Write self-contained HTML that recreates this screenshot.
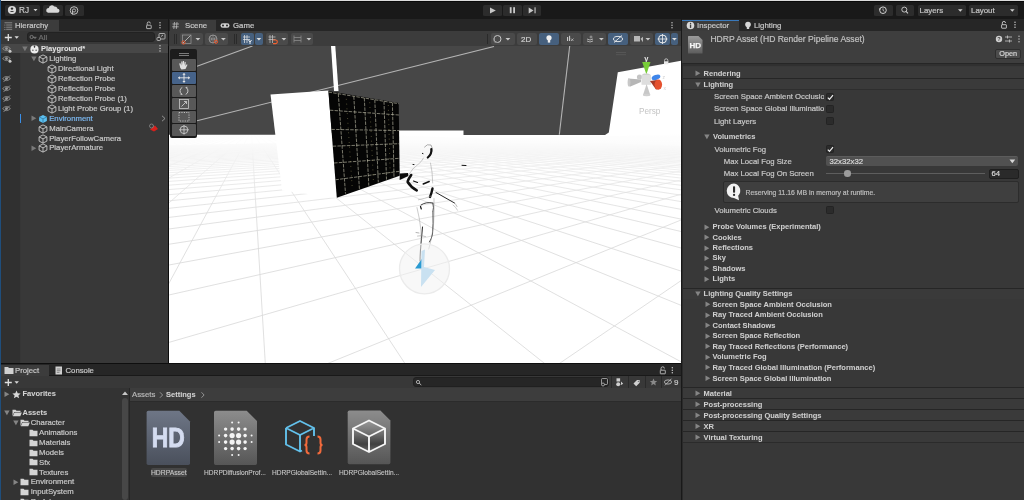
<!DOCTYPE html>
<html><head><meta charset="utf-8">
<style>
*{margin:0;padding:0;box-sizing:border-box}
html,body{width:1024px;height:500px;overflow:hidden;background:#191919;-webkit-font-smoothing:antialiased;font-family:"Liberation Sans",sans-serif;color:#c8c8c8}
.a{position:absolute}

.t{position:absolute;white-space:nowrap;font-size:7.8px;line-height:10px;color:#c8c8c8;-webkit-text-stroke:0.2px currentColor}
.b{font-weight:bold;-webkit-text-stroke:0.05px currentColor}
.btn{position:absolute;background:#2e2e2e;border-radius:2px}
.tb{position:absolute;background:#3c3c3c;border-radius:2px}
</style></head>
<body><div style="position:absolute;left:0;top:0;width:1024px;height:500px;will-change:transform;background:#191919;overflow:hidden">
<!-- top line and toolbar -->
<div class="a" style="left:0px;top:0px;width:1024px;height:0.9px;background:#dcdcdc;"></div>
<div class="a" style="left:0px;top:0.9px;width:1024px;height:1.1px;background:#0a0a0a;"></div>
<div class="a" style="left:0px;top:2px;width:1024px;height:17px;background:#191919;"></div>
<div class="a" style="left:5px;top:4.5px;width:35px;height:11.5px;background:#2c2c2c;border-radius:1.5px"></div>
<div class="a" style="left:43px;top:4.5px;width:19.5px;height:11.5px;background:#2c2c2c;border-radius:1.5px"></div>
<div class="a" style="left:65px;top:4.5px;width:18.5px;height:11.5px;background:#2c2c2c;border-radius:1.5px"></div>
<div class="a" style="left:483px;top:4.5px;width:18.8px;height:11.5px;background:#2c2c2c;border-radius:1.5px"></div>
<div class="a" style="left:503px;top:4.5px;width:18.8px;height:11.5px;background:#2c2c2c;border-radius:1.5px"></div>
<div class="a" style="left:522.5px;top:4.5px;width:18.5px;height:11.5px;background:#2c2c2c;border-radius:1.5px"></div>
<div class="a" style="left:874px;top:4.5px;width:18.6px;height:11.5px;background:#2c2c2c;border-radius:1.5px"></div>
<div class="a" style="left:895.7px;top:4.5px;width:18.7px;height:11.5px;background:#2c2c2c;border-radius:1.5px"></div>
<div class="a" style="left:917.8px;top:4.5px;width:48.2px;height:11.5px;background:#2c2c2c;border-radius:1.5px"></div>
<div class="a" style="left:969.3px;top:4.5px;width:48.7px;height:11.5px;background:#2c2c2c;border-radius:1.5px"></div>
<svg class="a" style="left:0;top:0" width="1024" height="19" viewBox="0 0 1024 19"><circle cx="12" cy="10" r="4.1" fill="#d8d8d8"/><circle cx="12" cy="8.6" r="1.2" fill="#2c2c2c"/><path d="M9.8,11 q2.2,1.8 4.4,0 z" fill="#2c2c2c"/><path d="M33.5,9 h4 l-2,2.2z" fill="#d0d0d0"/><path d="M48,12.8 h9.5 a2,2 0 0 0 0,-4 a2.6,2.6 0 0 0 -3.3,-2.2 a3,3 0 0 0 -5.4,1.3 a2.5,2.5 0 0 0 -0.8,4.9z" fill="#d8d8d8"/><circle cx="74" cy="10.5" r="3.8" fill="none" stroke="#cfcfcf" stroke-width="0.9"/><circle cx="74" cy="10.5" r="1.6" fill="none" stroke="#cfcfcf" stroke-width="0.8"/><line x1="72.5" y1="10.5" x2="72.5" y2="14.6" stroke="#cfcfcf" stroke-width="0.8"/><path d="M490,7.5 L495.8,10.5 L490,13.5Z" fill="#c8c8c8"/><rect x="509.8" y="7.2" width="1.8" height="6" fill="#c8c8c8"/><rect x="513.2" y="7.2" width="1.8" height="6" fill="#c8c8c8"/><path d="M528.7,7.5 L533.5,10.5 L528.7,13.5Z" fill="#c8c8c8"/><rect x="534.5" y="7.3" width="1.1" height="6" fill="#c8c8c8"/><circle cx="883" cy="10.2" r="3.3" fill="none" stroke="#d0d0d0" stroke-width="1"/><path d="M883,8.4 v2 l1.3,0.9" stroke="#d0d0d0" stroke-width="0.8" fill="none"/><path d="M878.8,8.6 l1.8,-0.2 -0.8,1.8z" fill="#d0d0d0"/><circle cx="904.3" cy="9.6" r="2.5" fill="none" stroke="#d0d0d0" stroke-width="0.9"/><line x1="906" y1="11.4" x2="908" y2="13.4" stroke="#d0d0d0" stroke-width="1.1"/><path d="M958,9.3 h4.6 l-2.3,2.4z" fill="#d0d0d0"/><path d="M1010,9.3 h4.6 l-2.3,2.4z" fill="#d0d0d0"/></svg>
<div class="t" style="left:19px;top:5.6px;font-size:8.2px;color:#c8c8c8">RJ</div>
<div class="t" style="left:919.5px;top:5.6px;font-size:7.9px;color:#c4c4c4">Layers</div>
<div class="t" style="left:971px;top:5.6px;font-size:7.9px;color:#c4c4c4">Layout</div>
<div class="a" style="left:0;top:0;width:1px;height:500px;background:#1f4e7c;z-index:5"></div>
<!-- ================= HIERARCHY ================= -->
<div class="a" style="left:1px;top:19px;width:167px;height:12px;background:#262626;"></div>
<div class="a" style="left:1px;top:20px;width:57.5px;height:11px;background:#3c3c3c;"></div>
<svg class="a" style="left:4px;top:21.5px" width="9" height="8" viewBox="0 0 9 8"><g stroke="#c8c8c8" stroke-width="0.55"><line x1="0.5" y1="0.8" x2="8.2" y2="0.8"/><line x1="2.2" y1="3" x2="8.2" y2="3"/><line x1="2.2" y1="5.2" x2="8.2" y2="5.2"/><line x1="2.2" y1="7.3" x2="8.2" y2="7.3"/></g><g fill="#c8c8c8"><rect x="0.5" y="2.7" width="0.8" height="0.7"/><rect x="0.5" y="4.9" width="0.8" height="0.7"/><rect x="0.5" y="7" width="0.8" height="0.7"/></g></svg>
<div class="t" style="left:15px;top:20.9px;font-size:7.75px;color:#c8c8c8">Hierarchy</div>
<svg class="a" style="left:144px;top:21px" width="22" height="9" viewBox="144 21 22 9"><path d="M147.2,25 v-1.5 a1.6,1.6 0 0 1 3.2,0" stroke="#d0d0d0" stroke-width="0.8" fill="none"/><rect x="146.6" y="25.2" width="4.6" height="3.4" rx="0.4" fill="none" stroke="#d0d0d0" stroke-width="0.8"/><g fill="#d0d0d0"><circle cx="160" cy="22.7" r="0.7"/><circle cx="160" cy="25.2" r="0.7"/><circle cx="160" cy="27.7" r="0.7"/></g></svg>
<div class="a" style="left:1px;top:31px;width:167px;height:12.5px;background:#383838;"></div>
<svg class="a" style="left:4px;top:33px" width="17" height="9" viewBox="0 0 17 9"><path d="M0.8,4.5 h7 M4.3,1 v7" stroke="#e0e0e0" stroke-width="1.3"/><path d="M10.5,3.2 h4.4 l-2.2,2.5z" fill="#d8d8d8"/></svg>
<div class="a" style="left:27px;top:32px;width:127.5px;height:10px;background:#282828;border-radius:3px;border:0.6px solid #222"></div>
<svg class="a" style="left:29px;top:34px" width="8" height="7" viewBox="0 0 8 7"><circle cx="2.6" cy="3" r="1.6" fill="none" stroke="#8a8a8a" stroke-width="0.8"/><path d="M4,3.3 h3.5 M6,3.3 v1.8" stroke="#8a8a8a" stroke-width="0.8"/></svg>
<div class="t" style="left:38.5px;top:32.5px;font-size:7.75px;color:#707070">All</div>
<svg class="a" style="left:155.5px;top:32px" width="10" height="10" viewBox="0 0 10 10"><rect x="3" y="1.5" width="6" height="5.5" rx="0.8" fill="none" stroke="#c8c8c8" stroke-width="0.8"/><rect x="1" y="5.5" width="3.5" height="3" rx="0.8" fill="#383838" stroke="#c8c8c8" stroke-width="0.8"/><path d="M5,4.5 l2,-1.5" stroke="#c8c8c8" stroke-width="0.8"/></svg>
<div class="a" style="left:1px;top:43.5px;width:167px;height:319.7px;background:#383838;"></div>
<div class="a" style="left:1px;top:43.5px;width:19px;height:319.7px;background:#303030;"></div>
<div class="a" style="left:20px;top:53px;width:1px;height:310px;background:#363636;"></div>
<div class="a" style="left:1px;top:44px;width:167px;height:9.2px;background:#474747;"></div>
<svg class="a" style="left:2px;top:45.3px" width="10" height="8" viewBox="0 0 10 8"><path d="M0.6,3.6 Q4.5,-0.6 8.4,3.6 Q4.5,7.6 0.6,3.6Z" fill="none" stroke="#9a9a9a" stroke-width="0.8"/><circle cx="4.5" cy="3.6" r="1.4" fill="#9a9a9a"/><circle cx="8" cy="6.2" r="1.5" fill="#c8c8c8"/></svg>
<svg class="a" style="left:2px;top:55.1px" width="10" height="8" viewBox="0 0 10 8"><path d="M0.6,3.6 Q4.5,-0.6 8.4,3.6 Q4.5,7.6 0.6,3.6Z" fill="none" stroke="#9a9a9a" stroke-width="0.8"/><circle cx="4.5" cy="3.6" r="1.4" fill="#9a9a9a"/><circle cx="8" cy="6.2" r="1.5" fill="#c8c8c8"/></svg>
<svg class="a" style="left:2px;top:74.9px" width="10" height="8" viewBox="0 0 10 8"><path d="M0.6,3.6 Q4.5,-0.6 8.4,3.6 Q4.5,7.6 0.6,3.6Z" fill="none" stroke="#9a9a9a" stroke-width="0.8"/><circle cx="4.5" cy="3.6" r="1.4" fill="#9a9a9a"/><line x1="1.5" y1="7" x2="8" y2="0.5" stroke="#9a9a9a" stroke-width="0.8"/></svg>
<svg class="a" style="left:2px;top:84.8px" width="10" height="8" viewBox="0 0 10 8"><path d="M0.6,3.6 Q4.5,-0.6 8.4,3.6 Q4.5,7.6 0.6,3.6Z" fill="none" stroke="#9a9a9a" stroke-width="0.8"/><circle cx="4.5" cy="3.6" r="1.4" fill="#9a9a9a"/><line x1="1.5" y1="7" x2="8" y2="0.5" stroke="#9a9a9a" stroke-width="0.8"/></svg>
<svg class="a" style="left:2px;top:94.8px" width="10" height="8" viewBox="0 0 10 8"><path d="M0.6,3.6 Q4.5,-0.6 8.4,3.6 Q4.5,7.6 0.6,3.6Z" fill="none" stroke="#9a9a9a" stroke-width="0.8"/><circle cx="4.5" cy="3.6" r="1.4" fill="#9a9a9a"/><line x1="1.5" y1="7" x2="8" y2="0.5" stroke="#9a9a9a" stroke-width="0.8"/></svg>
<svg class="a" style="left:2px;top:104.7px" width="10" height="8" viewBox="0 0 10 8"><path d="M0.6,3.6 Q4.5,-0.6 8.4,3.6 Q4.5,7.6 0.6,3.6Z" fill="none" stroke="#9a9a9a" stroke-width="0.8"/><circle cx="4.5" cy="3.6" r="1.4" fill="#9a9a9a"/><line x1="1.5" y1="7" x2="8" y2="0.5" stroke="#9a9a9a" stroke-width="0.8"/></svg>
<svg class="a" style="left:22px;top:45.7px" width="7" height="7"><path d="M0.2,0.5 L5.6,0.5 L2.9,5.3Z" fill="#7a7a7a"/></svg>
<svg class="a" style="left:29.5px;top:44.5px" width="9" height="9" viewBox="0 0 9 9"><circle cx="4.5" cy="4.4" r="4.1" fill="#ececec"/><path d="M3.6,0.5 L5.4,0.5 L5,2.8 L4,2.8Z" fill="#383838"/><ellipse cx="2.9" cy="5.2" rx="0.6" ry="0.8" fill="#383838"/><ellipse cx="6.1" cy="5.2" rx="0.6" ry="0.8" fill="#383838"/></svg>
<div class="t b" style="left:41px;top:44.0px;font-size:7.5px;color:#e4e4e4">Playground*</div>
<svg class="a" style="left:158px;top:44px" width="4" height="9"><g fill="#d0d0d0"><circle cx="2" cy="1.8" r="0.7"/><circle cx="2" cy="4.4" r="0.7"/><circle cx="2" cy="7" r="0.7"/></g></svg>
<svg class="a" style="left:31px;top:55.800000000000004px" width="7" height="7"><path d="M0.2,0.5 L5.6,0.5 L2.9,5.3Z" fill="#7a7a7a"/></svg>
<svg class="a" style="left:37.8px;top:54.0px" width="10" height="10" viewBox="0 0 10 10"><path d="M5,0.9 L8.9,2.9 L8.9,7.1 L5,9.1 L1.1,7.1 L1.1,2.9Z M1.1,2.9 L5,4.9 L8.9,2.9 M5,4.9 V9.1" fill="none" stroke="#c8c8c8" stroke-width="0.9" stroke-linejoin="round"/></svg>
<div class="t" style="left:49.2px;top:54.0px;font-size:7.75px">Lighting</div>
<svg class="a" style="left:46.8px;top:63.89999999999999px" width="10" height="10" viewBox="0 0 10 10"><path d="M5,0.9 L8.9,2.9 L8.9,7.1 L5,9.1 L1.1,7.1 L1.1,2.9Z M1.1,2.9 L5,4.9 L8.9,2.9 M5,4.9 V9.1" fill="none" stroke="#c8c8c8" stroke-width="0.9" stroke-linejoin="round"/></svg>
<div class="t" style="left:58px;top:63.9px;font-size:7.75px">Directional Light</div>
<svg class="a" style="left:46.8px;top:73.83px" width="10" height="10" viewBox="0 0 10 10"><path d="M5,0.9 L8.9,2.9 L8.9,7.1 L5,9.1 L1.1,7.1 L1.1,2.9Z M1.1,2.9 L5,4.9 L8.9,2.9 M5,4.9 V9.1" fill="none" stroke="#c8c8c8" stroke-width="0.9" stroke-linejoin="round"/></svg>
<div class="t" style="left:58px;top:73.8px;font-size:7.75px">Reflection Probe</div>
<svg class="a" style="left:46.8px;top:83.75999999999999px" width="10" height="10" viewBox="0 0 10 10"><path d="M5,0.9 L8.9,2.9 L8.9,7.1 L5,9.1 L1.1,7.1 L1.1,2.9Z M1.1,2.9 L5,4.9 L8.9,2.9 M5,4.9 V9.1" fill="none" stroke="#c8c8c8" stroke-width="0.9" stroke-linejoin="round"/></svg>
<div class="t" style="left:58px;top:83.8px;font-size:7.75px">Reflection Probe</div>
<svg class="a" style="left:46.8px;top:93.68999999999998px" width="10" height="10" viewBox="0 0 10 10"><path d="M5,0.9 L8.9,2.9 L8.9,7.1 L5,9.1 L1.1,7.1 L1.1,2.9Z M1.1,2.9 L5,4.9 L8.9,2.9 M5,4.9 V9.1" fill="none" stroke="#c8c8c8" stroke-width="0.9" stroke-linejoin="round"/></svg>
<div class="t" style="left:58px;top:93.7px;font-size:7.75px">Reflection Probe (1)</div>
<svg class="a" style="left:46.8px;top:103.61999999999999px" width="10" height="10" viewBox="0 0 10 10"><path d="M5,0.9 L8.9,2.9 L8.9,7.1 L5,9.1 L1.1,7.1 L1.1,2.9Z M1.1,2.9 L5,4.9 L8.9,2.9 M5,4.9 V9.1" fill="none" stroke="#c8c8c8" stroke-width="0.9" stroke-linejoin="round"/></svg>
<div class="t" style="left:58px;top:103.6px;font-size:7.75px">Light Probe Group (1)</div>
<div class="a" style="left:20.2px;top:113.5px;width:1px;height:9px;background:#3a8ee6;"></div>
<svg class="a" style="left:31px;top:115.1px" width="7" height="7"><path d="M0.5,0.5 L5.3,3.2 L0.5,5.9Z" fill="#7a7a7a"/></svg>
<svg class="a" style="left:37.8px;top:113.6px" width="10" height="10" viewBox="0 0 10 10"><path d="M5,0.9 L8.9,2.9 L8.9,7.1 L5,9.1 L1.1,7.1 L1.1,2.9Z" fill="#5cc0f0"/><path d="M1.1,2.9 L5,4.9 L8.9,2.9 M5,4.9 V9.1" fill="none" stroke="#2d6f96" stroke-width="0.7"/></svg>
<div class="t" style="left:49.2px;top:113.7px;font-size:7.75px;color:#7cb8f0">Environment</div>
<svg class="a" style="left:161px;top:115px" width="5" height="7"><path d="M1,0.8 L4,3.5 L1,6.2" stroke="#a8a8a8" stroke-width="0.8" fill="none"/></svg>
<svg class="a" style="left:37.8px;top:123.60000000000001px" width="10" height="10" viewBox="0 0 10 10"><path d="M5,0.9 L8.9,2.9 L8.9,7.1 L5,9.1 L1.1,7.1 L1.1,2.9Z M1.1,2.9 L5,4.9 L8.9,2.9 M5,4.9 V9.1" fill="none" stroke="#c8c8c8" stroke-width="0.9" stroke-linejoin="round"/></svg>
<div class="t" style="left:49.2px;top:123.6px;font-size:7.75px">MainCamera</div>
<svg class="a" style="left:148px;top:123px" width="11" height="9" viewBox="0 0 11 9"><path d="M2,6.5 L7,2.5 L10,6 L6,8.5Z" fill="#d8201c"/><circle cx="3.5" cy="3" r="2" fill="none" stroke="#8a8a8a" stroke-width="0.8"/></svg>
<svg class="a" style="left:37.8px;top:133.5px" width="10" height="10" viewBox="0 0 10 10"><path d="M5,0.9 L8.9,2.9 L8.9,7.1 L5,9.1 L1.1,7.1 L1.1,2.9Z M1.1,2.9 L5,4.9 L8.9,2.9 M5,4.9 V9.1" fill="none" stroke="#c8c8c8" stroke-width="0.9" stroke-linejoin="round"/></svg>
<div class="t" style="left:49.2px;top:133.5px;font-size:7.75px">PlayerFollowCamera</div>
<svg class="a" style="left:31px;top:144.9px" width="7" height="7"><path d="M0.5,0.5 L5.3,3.2 L0.5,5.9Z" fill="#7a7a7a"/></svg>
<svg class="a" style="left:37.8px;top:143.4px" width="10" height="10" viewBox="0 0 10 10"><path d="M5,0.9 L8.9,2.9 L8.9,7.1 L5,9.1 L1.1,7.1 L1.1,2.9Z M1.1,2.9 L5,4.9 L8.9,2.9 M5,4.9 V9.1" fill="none" stroke="#c8c8c8" stroke-width="0.9" stroke-linejoin="round"/></svg>
<div class="t" style="left:49.2px;top:143.4px;font-size:7.75px">PlayerArmature</div>
<!-- ================= SCENE ================= -->
<div class="a" style="left:169px;top:19px;width:512px;height:12px;background:#262626"></div>
<div class="a" style="left:170px;top:20px;width:46px;height:11px;background:#3c3c3c"></div>
<div class="t" style="left:185px;top:20.5px">Scene</div>
<div class="t" style="left:233px;top:20.5px">Game</div>
<div class="a" style="left:169px;top:31px;width:512px;height:15px;background:#3c3c3c"></div>
<div class="a" style="left:174px;top:34px;width:0.8px;height:10px;background:#2a2a2a"></div>
<div class="a" style="left:176px;top:34px;width:0.8px;height:10px;background:#2a2a2a"></div>
<div class="tb" style="left:179.6px;top:33.2px;width:23px;height:11.7px;background:#4a4a4a"></div>
<div class="tb" style="left:205px;top:33.2px;width:23.4px;height:11.7px;background:#4a4a4a"></div>
<div class="a" style="left:234px;top:34px;width:0.8px;height:10px;background:#2a2a2a"></div>
<div class="a" style="left:236px;top:34px;width:0.8px;height:10px;background:#2a2a2a"></div>
<div class="tb" style="left:240.9px;top:33.2px;width:12.9px;height:11.7px;background:#46607e"></div>
<div class="tb" style="left:254.6px;top:33.2px;width:8.9px;height:11.7px;background:#46607e"></div>
<div class="tb" style="left:265.9px;top:33.2px;width:22.6px;height:11.7px;background:#4a4a4a"></div>
<div class="tb" style="left:290.9px;top:33.2px;width:22.6px;height:11.7px;background:#4a4a4a"></div>
<div class="a" style="left:487px;top:34px;width:0.8px;height:10px;background:#2a2a2a"></div>
<div class="tb" style="left:490.9px;top:33.2px;width:24px;height:11.7px;background:#4a4a4a"></div>
<div class="tb" style="left:517.2px;top:33.2px;width:19.6px;height:11.7px;background:#4a4a4a"></div>
<div class="tb" style="left:539.3px;top:33.2px;width:19.5px;height:11.7px;background:#46607e"></div>
<div class="tb" style="left:561.2px;top:33.2px;width:19.5px;height:11.7px;background:#4a4a4a"></div>
<div class="tb" style="left:583px;top:33.2px;width:23px;height:11.7px;background:#4a4a4a"></div>
<div class="tb" style="left:608.4px;top:33.2px;width:19.2px;height:11.7px;background:#46607e"></div>
<div class="tb" style="left:630px;top:33.2px;width:23px;height:11.7px;background:#4a4a4a"></div>
<div class="tb" style="left:655.3px;top:33.2px;width:14.3px;height:11.7px;background:#46607e"></div>
<div class="tb" style="left:670.5px;top:33.2px;width:7.5px;height:11.7px;background:#46607e"></div>
<div class="t" style="left:521px;top:34.5px;font-size:8px;color:#d0d0d0">2D</div>
<svg class="a" style="left:169px;top:19px" width="512" height="27" viewBox="169 19 512 27">
<g stroke="#c8c8c8" stroke-width="0.7"><line x1="174.5" y1="22" x2="173.8" y2="29"/><line x1="177" y1="22" x2="176.3" y2="29"/><line x1="172.5" y1="24" x2="179" y2="24"/><line x1="172.2" y1="26.8" x2="178.7" y2="26.8"/></g>
<rect x="220.5" y="23.2" width="9" height="4.6" rx="2.3" fill="#d0d0d0"/><circle cx="223" cy="25.5" r="1" fill="#282828"/><circle cx="227" cy="25.5" r="1" fill="#282828"/>
<rect x="182.5" y="35" width="8.5" height="8.5" fill="none" stroke="#9a9a9a" stroke-width="0.7"/><line x1="183" y1="43" x2="190.5" y2="35.5" stroke="#c8c8c8" stroke-width="0.8"/><circle cx="183.5" cy="42.5" r="1.6" fill="none" stroke="#e8582e" stroke-width="1"/>
<path d="M195.5,38 h4.8 l-2.4,2.6z" fill="#c8c8c8"/>
<circle cx="213" cy="39" r="4" fill="none" stroke="#b0b0b0" stroke-width="0.7"/><path d="M209,39 h8 M213,35 v8 M210.5,36.5 q2.5,2.5 0,5 M215.5,36.5 q-2.5,2.5 0,5" stroke="#b0b0b0" stroke-width="0.5" fill="none"/><circle cx="216" cy="41.7" r="1.6" fill="none" stroke="#e8582e" stroke-width="1"/>
<path d="M221,38 h4.8 l-2.4,2.6z" fill="#c8c8c8"/>
<g stroke="#e8e8e8" stroke-width="0.7"><line x1="244.5" y1="35" x2="244.5" y2="43"/><line x1="247" y1="35" x2="247" y2="43"/><line x1="243" y1="37" x2="250" y2="37"/><line x1="243" y1="39.5" x2="250" y2="39.5"/></g><path d="M248.5,40 l1.5,2 1.5,-2 M250,42 v2" stroke="#ffffff" stroke-width="0.9" fill="none"/>
<path d="M256.5,38 h4.8 l-2.4,2.6z" fill="#e0e0e0"/>
<g stroke="#c8c8c8" stroke-width="0.7"><line x1="270" y1="35" x2="270" y2="43"/><line x1="272.5" y1="35" x2="272.5" y2="43"/><line x1="268.5" y1="37" x2="275.5" y2="37"/><line x1="268.5" y1="39.5" x2="275.5" y2="39.5"/></g><path d="M273,40 h2.5 a1.8,1.8 0 0 1 0,3.6 h-2.5" stroke="#f06030" stroke-width="1.1" fill="none"/>
<path d="M281.5,38 h4.8 l-2.4,2.6z" fill="#c8c8c8"/>
<g stroke="#8a8a8a" stroke-width="0.8" fill="none"><path d="M294,35.5 v7 M301,35.5 v7 M294,37.5 h7 M294,40.5 h7"/></g>
<path d="M306.5,38 h4.8 l-2.4,2.6z" fill="#c8c8c8"/>
<circle cx="497.5" cy="39" r="3.5" fill="none" stroke="#c8c8c8" stroke-width="1"/><path d="M495,36.8 a3.5,3.5 0 0 0 3,5.7 a3,3 0 0 1 -3,-5.7z" fill="#888"/>
<path d="M505.5,38 h4.8 l-2.4,2.6z" fill="#c8c8c8"/>
<circle cx="549" cy="37.8" r="2.6" fill="#f0f0f0"/><rect x="547.8" y="40" width="2.4" height="2.6" fill="#f0f0f0"/>
<g fill="#c8c8c8"><rect x="567" y="37" width="1.1" height="4"/><rect x="569" y="35.8" width="1.1" height="5.2"/><path d="M571,38.5 l2.5,2.5 M573.5,38.5 l-2.5,2.5" stroke="#c8c8c8" stroke-width="0.7"/></g>
<path d="M587,41 q3,2 6,0 M587,39 q3,2 6,0" stroke="#c8c8c8" stroke-width="0.8" fill="none"/><path d="M591,35.5 v3 M589.5,37 h3" stroke="#c8c8c8" stroke-width="0.6"/>
<path d="M599,38 h4.8 l-2.4,2.6z" fill="#c8c8c8"/>
<ellipse cx="618" cy="39" rx="4.5" ry="2.6" fill="none" stroke="#f0f0f0" stroke-width="0.9"/><line x1="614" y1="42.5" x2="622" y2="35.5" stroke="#f0f0f0" stroke-width="0.9"/>
<rect x="634" y="36" width="6" height="5.5" fill="#b8b8b8"/><path d="M640.5,38.7 l2.5,-2 v5.5z" fill="#b8b8b8"/>
<path d="M645.5,38 h4.8 l-2.4,2.6z" fill="#c8c8c8"/>
<circle cx="662.5" cy="39" r="4" fill="none" stroke="#f0f0f0" stroke-width="1"/><path d="M662.5,34 v10 M657.5,39 h10" stroke="#f0f0f0" stroke-width="0.8"/>
<path d="M672,38 h4.8 l-2.4,2.6z" fill="#e0e0e0"/>
<g fill="#d0d0d0"><circle cx="672" cy="22.7" r="0.7"/><circle cx="672" cy="25.2" r="0.7"/><circle cx="672" cy="27.7" r="0.7"/></g>
</svg>

<svg class="a" style="left:169px;top:46px" width="512" height="317" viewBox="169 46 512 317">
<defs>
<linearGradient id="gfade" gradientUnits="userSpaceOnUse" x1="0" y1="130" x2="0" y2="250">
<stop offset="0" stop-color="#fff" stop-opacity="1"/>
<stop offset="0.1" stop-color="#fff" stop-opacity="0.93"/>
<stop offset="0.25" stop-color="#fff" stop-opacity="0.62"/>
<stop offset="0.46" stop-color="#fff" stop-opacity="0.3"/>
<stop offset="0.71" stop-color="#fff" stop-opacity="0.08"/>
<stop offset="1" stop-color="#fff" stop-opacity="0"/>
</linearGradient>
<radialGradient id="circ" cx="0.5" cy="0.5" r="0.5">
<stop offset="0" stop-color="#e8e8e8" stop-opacity="0.5"/>
<stop offset="0.85" stop-color="#e4e4e4" stop-opacity="0.6"/>
<stop offset="1" stop-color="#e0e0e0" stop-opacity="0"/>
</radialGradient>
</defs>
<rect x="169" y="46" width="512" height="317" fill="#ffffff"/>
<g stroke="#d8d8d8" stroke-width="0.8" fill="none">
<line x1="100.4" y1="147.2" x2="759.9" y2="133.5"/>
<line x1="100.0" y1="136.2" x2="227.2" y2="131.5"/>
<line x1="101.2" y1="147.5" x2="760.0" y2="133.6"/>
<line x1="100.0" y1="136.3" x2="227.7" y2="131.5"/>
<line x1="102.0" y1="147.9" x2="760.0" y2="133.6"/>
<line x1="100.2" y1="136.5" x2="228.3" y2="131.5"/>
<line x1="100.4" y1="148.3" x2="760.0" y2="133.7"/>
<line x1="100.2" y1="136.6" x2="228.8" y2="131.5"/>
<line x1="101.3" y1="148.7" x2="759.9" y2="133.8"/>
<line x1="100.2" y1="136.8" x2="229.4" y2="131.5"/>
<line x1="102.1" y1="149.1" x2="760.0" y2="133.9"/>
<line x1="100.2" y1="136.9" x2="229.9" y2="131.5"/>
<line x1="100.4" y1="149.5" x2="760.0" y2="133.9"/>
<line x1="100.2" y1="137.1" x2="230.5" y2="131.5"/>
<line x1="101.3" y1="150.0" x2="760.0" y2="134.0"/>
<line x1="100.2" y1="137.2" x2="231.1" y2="131.5"/>
<line x1="102.3" y1="150.4" x2="759.9" y2="134.1"/>
<line x1="100.2" y1="137.4" x2="231.6" y2="131.5"/>
<line x1="100.5" y1="151.0" x2="759.9" y2="134.2"/>
<line x1="100.2" y1="137.6" x2="232.2" y2="131.5"/>
<line x1="101.5" y1="151.5" x2="760.0" y2="134.3"/>
<line x1="100.2" y1="137.8" x2="232.7" y2="131.5"/>
<line x1="102.5" y1="152.0" x2="760.0" y2="134.4"/>
<line x1="100.2" y1="138.0" x2="233.3" y2="131.5"/>
<line x1="100.5" y1="152.6" x2="759.9" y2="134.5"/>
<line x1="100.2" y1="138.3" x2="233.8" y2="131.5"/>
<line x1="101.6" y1="153.2" x2="759.9" y2="134.6"/>
<line x1="100.2" y1="138.5" x2="234.4" y2="131.5"/>
<line x1="102.7" y1="153.9" x2="760.0" y2="134.7"/>
<line x1="100.1" y1="138.8" x2="234.9" y2="131.5"/>
<line x1="100.6" y1="154.6" x2="760.0" y2="134.8"/>
<line x1="100.1" y1="139.0" x2="235.5" y2="131.5"/>
<line x1="101.7" y1="155.3" x2="759.9" y2="135.0"/>
<line x1="100.1" y1="139.3" x2="236.0" y2="131.5"/>
<line x1="103.0" y1="156.1" x2="759.9" y2="135.1"/>
<line x1="100.1" y1="139.6" x2="236.5" y2="131.5"/>
<line x1="100.6" y1="157.0" x2="759.9" y2="135.2"/>
<line x1="100.1" y1="140.0" x2="237.1" y2="131.5"/>
<line x1="101.9" y1="157.8" x2="760.0" y2="135.4"/>
<line x1="100.1" y1="140.3" x2="237.6" y2="131.5"/>
<line x1="103.3" y1="158.7" x2="759.9" y2="135.6"/>
<line x1="100.1" y1="140.7" x2="238.2" y2="131.5"/>
<line x1="100.7" y1="159.9" x2="759.9" y2="135.8"/>
<line x1="100.0" y1="141.1" x2="238.7" y2="131.5"/>
<line x1="102.1" y1="160.9" x2="759.9" y2="136.0"/>
<line x1="100.0" y1="141.6" x2="239.3" y2="131.5"/>
<line x1="103.6" y1="162.0" x2="760.0" y2="136.2"/>
<line x1="100.5" y1="142.1" x2="239.8" y2="131.5"/>
<line x1="100.8" y1="163.5" x2="760.0" y2="136.4"/>
<line x1="100.5" y1="142.6" x2="240.3" y2="131.5"/>
<line x1="102.4" y1="164.8" x2="759.9" y2="136.6"/>
<line x1="100.5" y1="143.2" x2="240.9" y2="131.5"/>
<line x1="104.1" y1="166.2" x2="759.9" y2="136.9"/>
<line x1="100.5" y1="143.9" x2="241.4" y2="131.5"/>
<line x1="100.9" y1="168.0" x2="760.0" y2="137.2"/>
<line x1="100.5" y1="144.6" x2="241.9" y2="131.5"/>
<line x1="102.7" y1="169.8" x2="760.0" y2="137.5"/>
<line x1="100.5" y1="145.5" x2="242.5" y2="131.5"/>
<line x1="104.8" y1="171.7" x2="759.9" y2="137.9"/>
<line x1="100.5" y1="146.4" x2="243.0" y2="131.5"/>
<line x1="101.0" y1="174.1" x2="759.9" y2="138.3"/>
<line x1="100.5" y1="147.5" x2="243.5" y2="131.5"/>
<line x1="103.2" y1="176.5" x2="759.8" y2="138.7"/>
<line x1="100.5" y1="148.7" x2="244.1" y2="131.5"/>
<line x1="105.6" y1="179.1" x2="760.0" y2="139.2"/>
<line x1="100.5" y1="150.1" x2="244.6" y2="131.5"/>
<line x1="101.2" y1="182.5" x2="759.9" y2="139.8"/>
<line x1="100.5" y1="151.7" x2="245.1" y2="131.5"/>
<line x1="103.8" y1="185.9" x2="759.9" y2="140.4"/>
<line x1="100.5" y1="153.7" x2="245.7" y2="131.5"/>
<line x1="106.9" y1="189.8" x2="759.8" y2="141.1"/>
<line x1="100.5" y1="156.0" x2="246.2" y2="131.5"/>
<line x1="101.5" y1="195.0" x2="760.0" y2="142.0"/>
<line x1="100.5" y1="158.9" x2="246.7" y2="131.5"/>
<line x1="104.8" y1="200.3" x2="759.9" y2="143.0"/>
<line x1="100.5" y1="162.4" x2="247.2" y2="131.5"/>
<line x1="108.8" y1="206.6" x2="759.8" y2="144.1"/>
<line x1="100.5" y1="167.1" x2="247.8" y2="131.5"/>
<line x1="102.0" y1="215.4" x2="759.7" y2="145.6"/>
<line x1="100.5" y1="173.2" x2="248.3" y2="131.5"/>
<line x1="106.5" y1="224.8" x2="759.6" y2="147.4"/>
<line x1="100.4" y1="181.9" x2="248.8" y2="131.5"/>
<line x1="112.3" y1="236.6" x2="759.9" y2="149.6"/>
<line x1="100.4" y1="195.1" x2="249.4" y2="131.5"/>
<line x1="102.9" y1="254.5" x2="759.8" y2="152.5"/>
<line x1="100.4" y1="217.4" x2="249.9" y2="131.5"/>
<line x1="110.1" y1="275.8" x2="759.6" y2="156.6"/>
<line x1="100.3" y1="263.1" x2="250.4" y2="131.5"/>
<line x1="120.3" y1="305.9" x2="759.4" y2="162.4"/>
<line x1="121.2" y1="371.7" x2="250.9" y2="131.5"/>
<line x1="105.3" y1="360.8" x2="760.0" y2="171.4"/>
<line x1="265.6" y1="368.3" x2="251.4" y2="131.5"/>
<line x1="289.9" y1="378.8" x2="759.6" y2="188.1"/>
<line x1="406.0" y1="365.1" x2="252.0" y2="131.5"/>
<line x1="539.7" y1="376.9" x2="758.9" y2="227.6"/>
<line x1="563.4" y1="378.4" x2="252.5" y2="131.5"/>
<line x1="705.4" y1="374.9" x2="253.0" y2="131.5"/>
<line x1="741.5" y1="329.9" x2="253.5" y2="131.5"/>
<line x1="742.5" y1="291.2" x2="254.0" y2="131.5"/>
<line x1="743.1" y1="265.0" x2="254.5" y2="131.5"/>
<line x1="743.6" y1="246.2" x2="255.1" y2="131.5"/>
<line x1="758.8" y1="235.1" x2="255.6" y2="131.5"/>
<line x1="757.4" y1="223.3" x2="256.1" y2="131.5"/>
<line x1="756.3" y1="214.0" x2="256.6" y2="131.5"/>
<line x1="755.4" y1="206.3" x2="257.1" y2="131.4"/>
<line x1="754.7" y1="200.0" x2="257.6" y2="131.4"/>
<line x1="754.1" y1="194.6" x2="258.1" y2="131.4"/>
<line x1="753.5" y1="190.0" x2="258.6" y2="131.4"/>
<line x1="753.1" y1="186.0" x2="259.1" y2="131.4"/>
<line x1="752.7" y1="182.5" x2="259.7" y2="131.4"/>
<line x1="759.5" y1="180.1" x2="260.2" y2="131.4"/>
<line x1="758.7" y1="177.3" x2="260.7" y2="131.4"/>
<line x1="758.1" y1="174.8" x2="261.2" y2="131.4"/>
<line x1="757.5" y1="172.6" x2="261.7" y2="131.4"/>
<line x1="757.0" y1="170.5" x2="262.2" y2="131.4"/>
<line x1="756.5" y1="168.7" x2="262.7" y2="131.4"/>
<line x1="756.1" y1="167.0" x2="263.2" y2="131.4"/>
<line x1="755.7" y1="165.5" x2="263.7" y2="131.4"/>
<line x1="755.3" y1="164.1" x2="264.2" y2="131.4"/>
<line x1="759.7" y1="163.1" x2="264.7" y2="131.4"/>
<line x1="759.2" y1="161.8" x2="265.2" y2="131.4"/>
<line x1="758.7" y1="160.7" x2="265.7" y2="131.4"/>
<line x1="758.3" y1="159.6" x2="266.2" y2="131.4"/>
<line x1="757.9" y1="158.6" x2="266.7" y2="131.4"/>
<line x1="757.5" y1="157.7" x2="267.2" y2="131.4"/>
<line x1="757.2" y1="156.9" x2="267.7" y2="131.4"/>
<line x1="756.8" y1="156.1" x2="268.2" y2="131.4"/>
<line x1="756.5" y1="155.3" x2="268.6" y2="131.4"/>
<line x1="759.8" y1="154.7" x2="269.1" y2="131.4"/>
<line x1="759.4" y1="154.1" x2="269.6" y2="131.4"/>
<line x1="759.0" y1="153.4" x2="270.1" y2="131.4"/>
<line x1="758.7" y1="152.8" x2="270.6" y2="131.4"/>
<line x1="758.4" y1="152.2" x2="271.1" y2="131.4"/>
<line x1="758.1" y1="151.7" x2="271.6" y2="131.4"/>
<line x1="757.8" y1="151.1" x2="272.1" y2="131.4"/>
<line x1="757.5" y1="150.6" x2="272.6" y2="131.4"/>
<line x1="757.3" y1="150.2" x2="273.1" y2="131.4"/>
<line x1="759.8" y1="149.8" x2="273.5" y2="131.4"/>
<line x1="759.5" y1="149.4" x2="274.0" y2="131.4"/>
</g>
<rect x="169" y="128" width="512" height="122" fill="url(#gfade)"/>
<polygon fill="#474747" points="169,46 681,46 681,60.7 617.8,72.3 608.8,132.5 605,135 463.5,135 463.5,130.5 398,130.5 274,134.75 169,134.75"/>
<g stroke="#b4b4b4" stroke-width="1.1" fill="none">
<line x1="197" y1="66.3" x2="252.5" y2="46"/>
<line x1="197" y1="120.7" x2="494" y2="46.5"/>
<line x1="569.7" y1="46" x2="559.3" y2="134.8"/>
</g>
<polygon fill="#ffffff" points="331,46 335.3,46 338.5,91 334,91"/>
<polygon fill="#ffffff" points="270.5,94.6 328.4,90.5 336.8,198 282,190.6"/>
<polygon fill="#050505" points="328.4,91 398.7,103 399.7,175.7 336.8,197.8"/>

<g stroke="#c8c6b0" stroke-width="0.6" stroke-dasharray="3.5 1.2" fill="none"><line x1="338.3" y1="93.7" x2="345.5" y2="193.7"/><line x1="353.8" y1="96.3" x2="359.4" y2="188.9"/><line x1="364.3" y1="98.0" x2="368.8" y2="185.6"/><line x1="374.8" y1="99.8" x2="378.3" y2="182.4"/><line x1="384.0" y1="101.3" x2="386.5" y2="179.5"/><line x1="392.4" y1="102.7" x2="394.0" y2="176.9"/><line x1="328.5" y1="92.1" x2="398.7" y2="103.7"/><line x1="329.9" y1="110.2" x2="398.9" y2="115.0"/><line x1="331.4" y1="129.4" x2="399.1" y2="130.6"/><line x1="332.7" y1="146.2" x2="399.3" y2="143.7"/><line x1="334.1" y1="163.0" x2="399.5" y2="158.3"/><line x1="335.4" y1="179.8" x2="399.6" y2="171.3"/></g><g stroke="#9a9460" stroke-width="0.6" stroke-dasharray="0.8 4" fill="none"><line x1="346.3" y1="98.9" x2="352.2" y2="187.4"/><line x1="369.7" y1="102.4" x2="373.4" y2="180.5"/><line x1="388.3" y1="105.1" x2="390.2" y2="175.1"/></g>
<g fill="none" stroke="#111" stroke-linecap="round">
<path d="M424.5,147 q2.5,-3.5 6.5,-2 q2,3 1,6.5" stroke-width="0.6" stroke="#777"/>
<path d="M431.3,149 q0.8,5 -3.5,8.5" stroke-width="2.2"/>
<path d="M422.4,153.4 l0.6,0.2" stroke-width="1"/>
<path d="M413,164.5 l1,0.1" stroke-width="1"/>
<path d="M411.2,175 q-3.5,5 -3.5,7 q3,5 9,8.3" stroke-width="2.6"/>
<path d="M413.5,181 l4,1.5" stroke-width="1.2"/>
<path d="M423.2,184 l6,-2.5" stroke-width="1.5"/>
<path d="M432.5,188.5 q-1,5 -2.5,8.5" stroke-width="2.4"/>
<path d="M436,192.5 l18.5,10.5" stroke-width="0.9"/>
<path d="M454.5,203 q1.5,1.5 2.5,3.5" stroke-width="0.6" stroke="#888"/>
<path d="M462,165.3 l4,0.2" stroke-width="1"/>
<path d="M421,205 q5,-3.5 12,-2" stroke-width="0.8"/>
<path d="M433,203.5 q1,4 0,8" stroke-width="0.8"/>
<path d="M420.5,206.5 l0.8,2.5" stroke-width="1.2"/>
<path d="M433,212 q0.5,12 -0.5,22 q-1,5 -3,8" stroke-width="0.8"/>
<path d="M422.5,227 q-1,12 -2,22 q-0.5,8 -0.5,12" stroke-width="0.9"/>
<path d="M416,232.5 l3,0.5" stroke-width="0.5" stroke="#666"/>
<path d="M417.5,236 q4,-1 8,0.5" stroke-width="0.5" stroke="#888"/>
</g>
<g fill="none" stroke="#a0a0a0" stroke-width="0.55" stroke-linecap="round">
<path d="M423.5,158 q-2,4 -5,6 q-6,4 -10,11"/>
<path d="M430.5,163 q2,8 2.2,20"/>
<path d="M418.4,199.8 q6,-1 13,-3.8"/>
<path d="M417,207.6 q3,12 4,23.4 q0.3,9 0,18"/>
<path d="M434,198.5 q0.5,14 -0.5,27 q-1.5,12 -4.7,23.5"/>
<path d="M453,205 q3,2 4.5,5.2"/>
</g>
<polygon fill="#0a0a0a" points="399.7,173.6 408,173 408.4,176 399.7,180"/>
<circle cx="424.5" cy="268.8" r="25" fill="#f3f3f3" fill-opacity="0.55" stroke="#ebebeb" stroke-width="1.3"/>
<polygon fill="#2a9bd2" points="415,268.5 422.5,258 422.5,268.5"/>
<polygon fill="#c9e1f1" points="421.5,251 425,249.5 424,267 435,270 421,287"/>
<g>
<line x1="616" y1="52.5" x2="626" y2="52.5" stroke="#5a5a5a" stroke-width="0.8"/>
<line x1="616" y1="54.7" x2="626" y2="54.7" stroke="#5a5a5a" stroke-width="0.8"/>
<text x="646.3" y="61" font-family="Liberation Sans" font-weight="bold" font-size="7.5" fill="#e8e8e8" text-anchor="middle">y</text>
<path d="M664.5,61.5 v-1 a1.7,1.7 0 0 1 3.4,0 v1" stroke="#e8e8e8" stroke-width="0.7" fill="none"/>
<rect x="664" y="61.3" width="4.4" height="3" fill="#e8e8e8"/>
<polygon points="642.2,62 650.5,62 646.4,74.5" fill="#78cc38"/>
<polygon points="628,78.5 641,79.5 641,82 629.8,86.8" fill="#b6b6b6"/>
<ellipse cx="629" cy="82.6" rx="1.4" ry="4.1" fill="#c8c8c8"/>
<circle cx="639.5" cy="77" r="2.6" fill="#c4c4c4"/>
<rect x="641.5" y="75" width="9.5" height="9.8" fill="#dedede"/>
<polygon points="641.5,75 651,75 648,73.5 644,73.5" fill="#cfcfcf"/>
<polygon points="643,95 650.3,95 646.6,84" fill="#c8c8c8"/>
<ellipse cx="646.6" cy="95" rx="3.7" ry="1.2" fill="#d0d0d0"/>
<ellipse cx="656" cy="77.4" rx="4.5" ry="2.5" fill="#3f86ea" transform="rotate(-20 656 77.4)"/>
<polygon points="650,81 657,80 659,89 656,89.5" fill="#a63a26"/>
<ellipse cx="658.3" cy="84.6" rx="3.8" ry="5.1" fill="#e5512e"/>
<text x="662.5" y="78.5" font-family="Liberation Sans" font-size="5" fill="#cfcfcf">z</text>
<text x="663.5" y="89.5" font-family="Liberation Sans" font-size="5" fill="#cfcfcf">x</text>
<text x="639" y="114" font-family="Liberation Sans" font-size="8.2" fill="#c4c4c4">Persp</text>
</g>
</svg>


<div class="a" style="left:168.2px;top:46px;width:1.2px;height:318px;background:#0c0c0c"></div>
<!-- tool palette -->
<div class="a" style="left:170px;top:49px;width:27px;height:88.5px;background:#1c1c1c;border-radius:2px"></div>
<div class="a" style="left:179px;top:52.5px;width:10px;height:1px;background:#7a7a7a"></div>
<div class="a" style="left:179px;top:54.8px;width:10px;height:1px;background:#7a7a7a"></div>
<div class="a" style="left:172.2px;top:58.5px;width:23.7px;height:12.1px;background:#585858;border-radius:1px"></div>
<div class="a" style="left:172.2px;top:71.8px;width:23.7px;height:12.1px;background:#46638a;border-radius:1px"></div>
<div class="a" style="left:172.2px;top:84.8px;width:23.7px;height:12.1px;background:#585858;border-radius:1px"></div>
<div class="a" style="left:172.2px;top:97.8px;width:23.7px;height:12.1px;background:#585858;border-radius:1px"></div>
<div class="a" style="left:172.2px;top:110.8px;width:23.7px;height:12.1px;background:#585858;border-radius:1px"></div>
<div class="a" style="left:172.2px;top:123.8px;width:23.7px;height:12.1px;background:#585858;border-radius:1px"></div>
<svg class="a" style="left:170px;top:49px" width="27" height="89" viewBox="170 49 27 89">
<path d="M180.3,68 L179.2,63.5 L180.5,63.3 L181.3,65.8 L181.3,61.5 L182.4,61.5 L182.6,65 L182.9,61 L184,61 L184,65 L184.7,61.7 L185.7,61.9 L185.5,66 L186.7,64.3 L187.5,64.8 L185.5,69 L181.5,69.5 Z" fill="#e0e0e0"/>
<g stroke="#e8e8e8" stroke-width="0.9" fill="#e8e8e8">
<line x1="178.5" y1="77.8" x2="189.5" y2="77.8"/><line x1="184" y1="73.5" x2="184" y2="82.3"/>
<path d="M184,73 l-1.6,1.8 h3.2z M184,82.8 l-1.6,-1.8 h3.2z M178,77.8 l1.8,-1.6 v3.2z M190,77.8 l-1.8,-1.6 v3.2z" stroke="none"/>
</g>
<g stroke="#c8c8c8" stroke-width="0.9" fill="none">
<path d="M182.3,87.4 A3.9,3.9 0 0 0 181.8,94.2" stroke-width="1"/><path d="M185.7,94.4 A3.9,3.9 0 0 0 186.2,87.6" stroke-width="1"/><path d="M181,93 l1.8,1.8 l-2.3,0.3z M187,88.8 l-1.8,-1.8 l2.3,-0.3z" fill="#c8c8c8" stroke="none"/>
<rect x="179.5" y="99.5" width="9" height="9" stroke-width="0.8"/>
<path d="M181.5,106.5 L186.5,101.5 M184,101.5 h2.5 v2.5"/>
<rect x="179" y="112.5" width="10" height="8.5" stroke-dasharray="1.2 1.2"/>
<circle cx="184" cy="129.8" r="3.8"/><path d="M184,125 v9.6 M179.2,129.8 h9.6"/>
</g>
</svg>

<!-- ================= INSPECTOR ================= -->
<div class="a" style="left:682px;top:19px;width:342px;height:12px;background:#262626"></div>
<div class="a" style="left:682px;top:20px;width:57px;height:11px;background:#3c3c3c"></div>
<div class="a" style="left:682px;top:19.5px;width:57px;height:1px;background:#3a79bb"></div>
<div class="t" style="left:697px;top:20.5px">Inspector</div>
<svg class="a" style="left:686px;top:21px" width="9" height="9" viewBox="0 0 9 9"><circle cx="4.5" cy="4.5" r="3.8" fill="#d8d8d8"/><rect x="3.9" y="3.6" width="1.3" height="3.3" fill="#3c3c3c"/><circle cx="4.55" cy="2.5" r="0.7" fill="#3c3c3c"/></svg>
<svg class="a" style="left:744px;top:21px" width="8" height="9" viewBox="0 0 8 9"><circle cx="4" cy="3.6" r="2.8" fill="#d8d8d8"/><rect x="2.8" y="5.6" width="2.4" height="2.4" fill="#d8d8d8"/></svg>
<svg class="a" style="left:996px;top:20px" width="26" height="10" viewBox="996 20 26 10"><path d="M1002.3,24.5 v-1.5 a1.6,1.6 0 0 1 3.2,0" stroke="#e0e0e0" stroke-width="0.8" fill="none"/><rect x="1001.6" y="24.7" width="4.8" height="3.5" rx="0.4" fill="none" stroke="#e0e0e0" stroke-width="0.8"/><g fill="#d8d8d8"><circle cx="1015" cy="22.3" r="0.7"/><circle cx="1015" cy="24.8" r="0.7"/><circle cx="1015" cy="27.3" r="0.7"/></g></svg>
<div class="t" style="left:754px;top:20.5px">Lighting</div>
<div class="a" style="left:682px;top:31px;width:342px;height:469px;background:#383838;"></div>
<div class="a" style="left:682px;top:31px;width:342px;height:32px;background:#3e3e3e;"></div>
<div class="a" style="left:682px;top:63px;width:342px;height:1.2px;background:#262626;"></div>
<div class="a" style="left:682px;top:64.2px;width:342px;height:2.3px;background:#303030;"></div>
<div class="a" style="left:682px;top:66.5px;width:342px;height:0.8px;background:#262626;"></div>
<svg class="a" style="left:687px;top:35px" width="17" height="20" viewBox="0 0 17 20"><defs><linearGradient id="hdg" x1="0" y1="0" x2="0" y2="1"><stop offset="0" stop-color="#9a9a9a"/><stop offset="1" stop-color="#5c5c5c"/></linearGradient></defs><path d="M1,1.5 Q1,1 1.5,1 L11.5,1 L15.5,5 L15.5,18 Q15.5,18.6 15,18.6 L1.5,18.6 Q1,18.6 1,18 Z" fill="url(#hdg)"/><text x="8.3" y="13.3" font-family="Liberation Sans" font-weight="bold" font-size="8" fill="#f6f6f6" stroke="#f6f6f6" stroke-width="0.25" text-anchor="middle">HD</text></svg>
<div class="t" style="left:710.4px;top:34.4px;font-size:8.55px;color:#c0c0c0">HDRP Asset (HD Render Pipeline Asset)</div>
<svg class="a" style="left:994px;top:34px" width="30" height="10" viewBox="994 34 30 10"><circle cx="999" cy="39" r="3.2" fill="#d0d0d0"/><text x="999" y="41.3" font-family="Liberation Sans" font-weight="bold" font-size="5.5" fill="#3e3e3e" text-anchor="middle">?</text><g stroke="#c8c8c8" stroke-width="0.8"><line x1="1005" y1="37" x2="1012" y2="37"/><line x1="1005" y1="41" x2="1012" y2="41"/><line x1="1007.5" y1="35.5" x2="1007.5" y2="38.5"/><line x1="1009.5" y1="39.5" x2="1009.5" y2="42.5"/></g><g fill="#c8c8c8"><circle cx="1019" cy="36.2" r="0.7"/><circle cx="1019" cy="39" r="0.7"/><circle cx="1019" cy="41.8" r="0.7"/></g></svg>
<div class="a" style="left:995.3px;top:48.6px;width:25.7px;height:10.4px;background:#4c4c4c;border-radius:2px;border:0.6px solid #2e2e2e"></div>
<div class="t" style="left:999.3px;top:49.3px;font-size:7.3px;color:#d4d4d4">Open</div>
<div class="a" style="left:682px;top:67.3px;width:342px;height:10.6px;background:#3a3a3a;"></div>
<div class="a" style="left:682px;top:77.9px;width:342px;height:0.8px;background:#262626;"></div>
<svg class="a" style="left:695.2px;top:70.2px" width="7" height="7"><path d="M0.5,0.5 L5.3,3.2 L0.5,5.9Z" fill="#858585"/></svg><div class="t b" style="left:703.6px;top:68.7px;font-size:7.5px;color:#cfcfcf">Rendering</div>
<div class="a" style="left:682px;top:78.7px;width:342px;height:10.3px;background:#3a3a3a;"></div>
<div class="a" style="left:682px;top:89px;width:342px;height:0.6px;background:#2e2e2e;"></div>
<svg class="a" style="left:695.2px;top:81.60000000000001px" width="7" height="7"><path d="M0.2,0.5 L5.6,0.5 L2.9,5.3Z" fill="#858585"/></svg><div class="t b" style="left:703.6px;top:79.7px;font-size:7.5px;color:#cfcfcf">Lighting</div>
<div class="t" style="left:714px;top:92.2px;font-size:7.75px"><span style="display:inline-block;width:110.4px;overflow:hidden">Screen Space Ambient Occlusion</span></div>
<div class="a" style="left:825.7px;top:92.5px;width:8.2px;height:8.2px;background:#2b2b2b;border:0.6px solid #232323;border-radius:1.5px"></div><svg class="a" style="left:825.7px;top:92.5px" width="9" height="9"><path d="M1.8,4.6 L3.5,6.3 L7,2.2" stroke="#f0f0f0" stroke-width="1.2" fill="none"/></svg>
<div class="t" style="left:714px;top:104.4px;font-size:7.75px"><span style="display:inline-block;width:110.4px;overflow:hidden">Screen Space Global Illumination</span></div>
<div class="a" style="left:825.7px;top:104.5px;width:8.2px;height:8.2px;background:#2b2b2b;border:0.6px solid #232323;border-radius:1.5px"></div>
<div class="t" style="left:714px;top:116.8px;font-size:7.75px">Light Layers</div>
<div class="a" style="left:825.7px;top:116.8px;width:8.2px;height:8.2px;background:#2b2b2b;border:0.6px solid #232323;border-radius:1.5px"></div>
<svg class="a" style="left:704px;top:134.0px" width="7" height="7"><path d="M0.2,0.5 L5.6,0.5 L2.9,5.3Z" fill="#858585"/></svg>
<div class="t b" style="left:713px;top:132.1px;font-size:7.5px;color:#cfcfcf">Volumetrics</div>
<div class="t" style="left:714.4px;top:144.6px;font-size:7.75px">Volumetric Fog</div>
<div class="a" style="left:825.7px;top:144.60000000000002px;width:8.2px;height:8.2px;background:#2b2b2b;border:0.6px solid #232323;border-radius:1.5px"></div><svg class="a" style="left:825.7px;top:144.60000000000002px" width="9" height="9"><path d="M1.8,4.6 L3.5,6.3 L7,2.2" stroke="#f0f0f0" stroke-width="1.2" fill="none"/></svg>
<div class="t" style="left:723.7px;top:156.6px;font-size:7.75px">Max Local Fog Size</div>
<div class="a" style="left:826.4px;top:156px;width:192.1px;height:10.4px;background:#515151;border-radius:2px;border-top:0.6px solid #5c5c5c"></div>
<div class="t" style="left:829.5px;top:156.6px;font-size:7.75px;color:#d8d8d8">32x32x32</div>
<svg class="a" style="left:1009px;top:159px" width="7" height="5"><path d="M0.5,0.5 L6.2,0.5 L3.35,4.2Z" fill="#d8d8d8"/></svg>
<div class="t" style="left:723.7px;top:168.9px;font-size:7.75px">Max Local Fog On Screen</div>
<div class="a" style="left:826px;top:173px;width:159px;height:1px;background:#5e5e5e;"></div>
<div class="a" style="left:844.3px;top:170.1px;width:6.6px;height:6.6px;border-radius:50%;background:#9c9c9c"></div>
<div class="a" style="left:989px;top:168.8px;width:30px;height:10px;background:#2a2a2a;border:0.7px solid #1e1e1e;border-radius:2px"></div>
<div class="t" style="left:991.5px;top:169.1px;font-size:7.75px;color:#d8d8d8">64</div>
<div class="a" style="left:723.2px;top:180.8px;width:296.2px;height:22.4px;background:#3f3f3f;border:0.7px solid #2c2c2c;border-radius:2px"></div>
<svg class="a" style="left:725px;top:182px" width="20" height="20" viewBox="0 0 20 20"><path d="M9,1.5 A7.3,7.3 0 1 0 9,16.1 L14,18.2 L13.2,13.8 A7.3,7.3 0 0 0 9,1.5Z" fill="#f2f2f2"/><rect x="8" y="4.2" width="2.1" height="6.5" rx="0.8" fill="#2d2d2d"/><circle cx="9.05" cy="12.9" r="1.15" fill="#2d2d2d"/></svg>
<div class="t" style="left:745.6px;top:187.9px;font-size:6.85px;color:#bcbcbc">Reserving 11.16 MB in memory at runtime.</div>
<div class="t" style="left:714.4px;top:205.7px;font-size:7.75px">Volumetric Clouds</div>
<div class="a" style="left:825.7px;top:206.0px;width:8.2px;height:8.2px;background:#2b2b2b;border:0.6px solid #232323;border-radius:1.5px"></div>
<svg class="a" style="left:704px;top:223.70000000000002px" width="7" height="7"><path d="M0.5,0.5 L5.3,3.2 L0.5,5.9Z" fill="#858585"/></svg>
<div class="t b" style="left:712.6px;top:222.2px;font-size:7.5px;color:#cfcfcf">Probe Volumes (Experimental)</div>
<svg class="a" style="left:704px;top:234.0px" width="7" height="7"><path d="M0.5,0.5 L5.3,3.2 L0.5,5.9Z" fill="#858585"/></svg>
<div class="t b" style="left:712.6px;top:232.5px;font-size:7.5px;color:#cfcfcf">Cookies</div>
<svg class="a" style="left:704px;top:244.5px" width="7" height="7"><path d="M0.5,0.5 L5.3,3.2 L0.5,5.9Z" fill="#858585"/></svg>
<div class="t b" style="left:712.6px;top:243.0px;font-size:7.5px;color:#cfcfcf">Reflections</div>
<svg class="a" style="left:704px;top:254.90000000000003px" width="7" height="7"><path d="M0.5,0.5 L5.3,3.2 L0.5,5.9Z" fill="#858585"/></svg>
<div class="t b" style="left:712.6px;top:253.4px;font-size:7.5px;color:#cfcfcf">Sky</div>
<svg class="a" style="left:704px;top:265.40000000000003px" width="7" height="7"><path d="M0.5,0.5 L5.3,3.2 L0.5,5.9Z" fill="#858585"/></svg>
<div class="t b" style="left:712.6px;top:263.9px;font-size:7.5px;color:#cfcfcf">Shadows</div>
<svg class="a" style="left:704px;top:275.90000000000003px" width="7" height="7"><path d="M0.5,0.5 L5.3,3.2 L0.5,5.9Z" fill="#858585"/></svg>
<div class="t b" style="left:712.6px;top:274.4px;font-size:7.5px;color:#cfcfcf">Lights</div>
<div class="a" style="left:682px;top:288px;width:342px;height:0.9px;background:#262626;"></div>
<div class="a" style="left:682px;top:288.9px;width:342px;height:10px;background:#3a3a3a;"></div>
<svg class="a" style="left:695.2px;top:291.2px" width="7" height="7"><path d="M0.2,0.5 L5.6,0.5 L2.9,5.3Z" fill="#858585"/></svg><div class="t b" style="left:703.6px;top:289.3px;font-size:7.5px;color:#cfcfcf">Lighting Quality Settings</div>
<svg class="a" style="left:704.5px;top:301.3px" width="7" height="7"><path d="M0.5,0.5 L5.3,3.2 L0.5,5.9Z" fill="#858585"/></svg>
<div class="t b" style="left:712.6px;top:299.8px;font-size:7.5px;color:#cfcfcf">Screen Space Ambient Occlusion</div>
<svg class="a" style="left:704.5px;top:311.8px" width="7" height="7"><path d="M0.5,0.5 L5.3,3.2 L0.5,5.9Z" fill="#858585"/></svg>
<div class="t b" style="left:712.6px;top:310.3px;font-size:7.5px;color:#cfcfcf">Ray Traced Ambient Occlusion</div>
<svg class="a" style="left:704.5px;top:322.40000000000003px" width="7" height="7"><path d="M0.5,0.5 L5.3,3.2 L0.5,5.9Z" fill="#858585"/></svg>
<div class="t b" style="left:712.6px;top:320.9px;font-size:7.5px;color:#cfcfcf">Contact Shadows</div>
<svg class="a" style="left:704.5px;top:332.90000000000003px" width="7" height="7"><path d="M0.5,0.5 L5.3,3.2 L0.5,5.9Z" fill="#858585"/></svg>
<div class="t b" style="left:712.6px;top:331.4px;font-size:7.5px;color:#cfcfcf">Screen Space Reflection</div>
<svg class="a" style="left:704.5px;top:343.40000000000003px" width="7" height="7"><path d="M0.5,0.5 L5.3,3.2 L0.5,5.9Z" fill="#858585"/></svg>
<div class="t b" style="left:712.6px;top:341.9px;font-size:7.5px;color:#cfcfcf">Ray Traced Reflections (Performance)</div>
<svg class="a" style="left:704.5px;top:353.90000000000003px" width="7" height="7"><path d="M0.5,0.5 L5.3,3.2 L0.5,5.9Z" fill="#858585"/></svg>
<div class="t b" style="left:712.6px;top:352.4px;font-size:7.5px;color:#cfcfcf">Volumetric Fog</div>
<svg class="a" style="left:704.5px;top:364.40000000000003px" width="7" height="7"><path d="M0.5,0.5 L5.3,3.2 L0.5,5.9Z" fill="#858585"/></svg>
<div class="t b" style="left:712.6px;top:362.9px;font-size:7.5px;color:#cfcfcf">Ray Traced Global Illumination (Performance)</div>
<svg class="a" style="left:704.5px;top:375.0px" width="7" height="7"><path d="M0.5,0.5 L5.3,3.2 L0.5,5.9Z" fill="#858585"/></svg>
<div class="t b" style="left:712.6px;top:373.5px;font-size:7.5px;color:#cfcfcf">Screen Space Global Illumination</div>
<div class="a" style="left:682px;top:387.4px;width:342px;height:0.9px;background:#262626;"></div>
<div class="a" style="left:682px;top:388.29999999999995px;width:342px;height:10.000000000000034px;background:#3a3a3a;"></div>
<svg class="a" style="left:695.2px;top:390.45000000000005px" width="7" height="7"><path d="M0.5,0.5 L5.3,3.2 L0.5,5.9Z" fill="#858585"/></svg><div class="t b" style="left:703.6px;top:389.0px;font-size:7.5px;color:#cfcfcf">Material</div>
<div class="a" style="left:682px;top:398.3px;width:342px;height:0.9px;background:#262626;"></div>
<div class="a" style="left:682px;top:399.2px;width:342px;height:10.1px;background:#3a3a3a;"></div>
<svg class="a" style="left:695.2px;top:401.40000000000003px" width="7" height="7"><path d="M0.5,0.5 L5.3,3.2 L0.5,5.9Z" fill="#858585"/></svg><div class="t b" style="left:703.6px;top:399.9px;font-size:7.5px;color:#cfcfcf">Post-processing</div>
<div class="a" style="left:682px;top:409.3px;width:342px;height:0.9px;background:#262626;"></div>
<div class="a" style="left:682px;top:410.2px;width:342px;height:9.999999999999977px;background:#3a3a3a;"></div>
<svg class="a" style="left:695.2px;top:412.35px" width="7" height="7"><path d="M0.5,0.5 L5.3,3.2 L0.5,5.9Z" fill="#858585"/></svg><div class="t b" style="left:703.6px;top:410.9px;font-size:7.5px;color:#cfcfcf">Post-processing Quality Settings</div>
<div class="a" style="left:682px;top:420.2px;width:342px;height:0.9px;background:#262626;"></div>
<div class="a" style="left:682px;top:421.09999999999997px;width:342px;height:10.1px;background:#3a3a3a;"></div>
<svg class="a" style="left:695.2px;top:423.3px" width="7" height="7"><path d="M0.5,0.5 L5.3,3.2 L0.5,5.9Z" fill="#858585"/></svg><div class="t b" style="left:703.6px;top:421.8px;font-size:7.5px;color:#cfcfcf">XR</div>
<div class="a" style="left:682px;top:431.2px;width:342px;height:0.9px;background:#262626;"></div>
<div class="a" style="left:682px;top:432.09999999999997px;width:342px;height:10.200000000000022px;background:#3a3a3a;"></div>
<svg class="a" style="left:695.2px;top:434.35px" width="7" height="7"><path d="M0.5,0.5 L5.3,3.2 L0.5,5.9Z" fill="#858585"/></svg><div class="t b" style="left:703.6px;top:432.9px;font-size:7.5px;color:#cfcfcf">Virtual Texturing</div>
<div class="a" style="left:682px;top:442.3px;width:342px;height:0.9px;background:#2b2b2b;"></div>
<div class="a" style="left:682px;top:63px;width:1px;height:437px;background:#2a2a2a;"></div>
<!-- ================= PROJECT ================= -->
<div class="a" style="left:1px;top:363px;width:680px;height:1.2px;background:#0e0e0e;"></div>
<div class="a" style="left:1px;top:364.2px;width:680px;height:11.3px;background:#262626;"></div>
<div class="a" style="left:1px;top:364.5px;width:48px;height:11px;background:#3c3c3c;"></div>
<div class="t" style="left:15px;top:365.7px;font-size:7.75px;color:#c8c8c8">Project</div>
<div class="t" style="left:65.5px;top:365.7px;font-size:7.75px;color:#c8c8c8">Console</div>
<svg class="a" style="left:4px;top:366px" width="10" height="9" viewBox="0 0 10 9"><path d="M0.5,1 L4,1 L5,2 L9.5,2 L9.5,8 L0.5,8Z" fill="#d0d0d0"/></svg>
<svg class="a" style="left:55px;top:366px" width="8" height="9" viewBox="0 0 8 9"><rect x="0.5" y="0.5" width="6.5" height="8" fill="#d0d0d0"/><g stroke="#555" stroke-width="0.6"><line x1="1.8" y1="3" x2="5.5" y2="3"/><line x1="1.8" y1="4.7" x2="5.5" y2="4.7"/><line x1="1.8" y1="6.4" x2="4.5" y2="6.4"/></g></svg>
<svg class="a" style="left:658px;top:366px" width="20" height="9" viewBox="658 366 20 9"><path d="M661,370 v-1.5 a1.7,1.7 0 0 1 3.4,0" stroke="#d0d0d0" stroke-width="0.8" fill="none"/><rect x="660.3" y="370.2" width="5" height="3.6" rx="0.4" fill="none" stroke="#d0d0d0" stroke-width="0.8"/><g fill="#d0d0d0"><circle cx="672.3" cy="367.8" r="0.7"/><circle cx="672.3" cy="370.3" r="0.7"/><circle cx="672.3" cy="372.8" r="0.7"/></g></svg>
<div class="a" style="left:1px;top:375.5px;width:680px;height:12.5px;background:#383838;"></div>
<div class="a" style="left:1px;top:387.6px;width:680px;height:0.6px;background:#2a2a2a;"></div>
<svg class="a" style="left:4px;top:378px" width="17" height="9" viewBox="0 0 17 9"><path d="M0.8,4.5 h7 M4.3,1 v7" stroke="#e0e0e0" stroke-width="1.3"/><path d="M10.5,3.2 h4.4 l-2.2,2.5z" fill="#d8d8d8"/></svg>
<div class="a" style="left:412.9px;top:377.3px;width:196.4px;height:9.7px;background:#262626;border-radius:3px;border:0.6px solid #202020"></div>
<svg class="a" style="left:415px;top:379px" width="8" height="7" viewBox="0 0 8 7"><circle cx="3" cy="3" r="1.6" fill="none" stroke="#c8c8c8" stroke-width="0.8"/><line x1="4.2" y1="4.2" x2="6.3" y2="6" stroke="#c8c8c8" stroke-width="0.9"/></svg>
<div class="a" style="left:610.9px;top:376px;width:0.6px;height:12px;background:#2a2a2a;"></div>
<div class="a" style="left:627.9px;top:376px;width:0.6px;height:12px;background:#2a2a2a;"></div>
<div class="a" style="left:644.9px;top:376px;width:0.6px;height:12px;background:#2a2a2a;"></div>
<div class="a" style="left:661.4px;top:376px;width:0.6px;height:12px;background:#2a2a2a;"></div>
<svg class="a" style="left:598px;top:376px" width="83" height="12" viewBox="598 376 83 12"><rect x="601.5" y="378.5" width="6" height="6" rx="1" fill="none" stroke="#c8c8c8" stroke-width="0.7"/><circle cx="603" cy="384.5" r="1.5" fill="#262626" stroke="#c8c8c8" stroke-width="0.7"/><rect x="616.5" y="378.3" width="3.6" height="3.2" fill="#d0d0d0"/><circle cx="618.2" cy="384.2" r="2" fill="#d0d0d0"/><path d="M621,381.5 l2.2,2.2 l-2.2,1.2z" fill="#d0d0d0"/><path d="M633.5,383.5 l3.5,-3.5 h2.7 v2.7 l-3.5,3.5z" fill="#d0d0d0"/><circle cx="638.3" cy="381.3" r="0.5" fill="#383838"/><path d="M653.5,378.5 l1.1,2.4 2.6,0.2 -2,1.7 0.6,2.6 -2.3,-1.4 -2.3,1.4 0.6,-2.6 -2,-1.7 2.6,-0.2z" fill="#8a8a8a"/><ellipse cx="668" cy="382" rx="3.6" ry="2.1" fill="none" stroke="#c8c8c8" stroke-width="0.8"/><line x1="665" y1="385.3" x2="671.5" y2="378.7" stroke="#c8c8c8" stroke-width="0.8"/></svg>
<div class="t" style="left:674px;top:377.7px;font-size:8px;color:#c8c8c8">9</div>
<div class="a" style="left:1px;top:388.2px;width:128px;height:111.8px;background:#333333;"></div>
<div class="a" style="left:129px;top:388.2px;width:552px;height:111.8px;background:#313131;"></div>
<div class="a" style="left:128.5px;top:388.2px;width:1.2px;height:111.8px;background:#262626;"></div>
<div class="a" style="left:129.7px;top:388.2px;width:551.3px;height:12.6px;background:#3d3d3d;"></div>
<div class="a" style="left:129.7px;top:400.6px;width:551.3px;height:0.7px;background:#2b2b2b;"></div>
<div class="t" style="left:132px;top:390.3px;font-size:7.75px;color:#b8b8b8">Assets</div>
<svg class="a" style="left:158px;top:391px" width="50" height="8" viewBox="158 391 50 8"><path d="M160,392.3 L162.6,395 L160,397.7 M201.5,392.3 L204.1,395 L201.5,397.7" stroke="#a8a8a8" stroke-width="0.8" fill="none"/></svg>
<div class="t b" style="left:166px;top:390.3px;font-size:7.5px;color:#d4d4d4">Settings</div>
<div class="a" style="left:121.5px;top:398px;width:6.5px;height:102px;background:#474747;border-radius:3px"></div>
<svg class="a" style="left:121px;top:390px" width="8" height="6"><path d="M1,5 L4,1.5 L7,5z" fill="#c8c8c8"/></svg>
<svg class="a" style="left:4px;top:390.6px" width="7" height="7"><path d="M0.5,0.5 L5.3,3.2 L0.5,5.9Z" fill="#858585"/></svg>
<svg class="a" style="left:11.5px;top:389.5px" width="9" height="9" viewBox="0 0 9 9"><path d="M4.5,0.6 l1.2,2.6 2.9,0.3 -2.2,1.9 0.7,2.9 -2.6,-1.5 -2.6,1.5 0.7,-2.9 -2.2,-1.9 2.9,-0.3z" fill="#d8d8d8"/></svg>
<div class="t b" style="left:22.5px;top:389.1px;font-size:7.5px;color:#d4d4d4">Favorites</div>
<svg class="a" style="left:4px;top:409.9px" width="7" height="7"><path d="M0.2,0.5 L5.6,0.5 L2.9,5.3Z" fill="#858585"/></svg>
<svg class="a" style="left:11.5px;top:408.9px" width="10" height="8" viewBox="0 0 10 8"><path d="M0.5,0.8 L3.5,0.8 L4.5,1.8 L8.5,1.8 L8.5,3 L2.2,3 L0.5,7.3Z" fill="#d4d4d4"/><path d="M2.5,3.6 L9.8,3.6 L8.3,7.3 L0.8,7.3Z" fill="#d4d4d4"/></svg>
<div class="t b" style="left:22.5px;top:408.0px;font-size:7.5px;color:#d4d4d4">Assets</div>
<svg class="a" style="left:13px;top:419.8px" width="7" height="7"><path d="M0.2,0.5 L5.6,0.5 L2.9,5.3Z" fill="#858585"/></svg>
<svg class="a" style="left:20px;top:418.8px" width="10" height="8" viewBox="0 0 10 8"><path d="M0.5,0.8 L3.5,0.8 L4.5,1.8 L8.5,1.8 L8.5,3 L2.2,3 L0.5,7.3Z" fill="#d4d4d4"/><path d="M2.5,3.6 L9.8,3.6 L8.3,7.3 L0.8,7.3Z" fill="#d4d4d4"/></svg>
<div class="t" style="left:30.7px;top:417.9px;font-size:7.75px">Character</div>
<svg class="a" style="left:29px;top:428.7px" width="10" height="8" viewBox="0 0 10 8"><path d="M0.5,0.8 L3.5,0.8 L4.5,1.8 L8.5,1.8 L8.5,7.3 L0.5,7.3Z" fill="#d4d4d4"/></svg>
<div class="t" style="left:39px;top:427.8px;font-size:7.75px">Animations</div>
<svg class="a" style="left:29px;top:438.62px" width="10" height="8" viewBox="0 0 10 8"><path d="M0.5,0.8 L3.5,0.8 L4.5,1.8 L8.5,1.8 L8.5,7.3 L0.5,7.3Z" fill="#d4d4d4"/></svg>
<div class="t" style="left:39px;top:437.7px;font-size:7.75px">Materials</div>
<svg class="a" style="left:29px;top:448.53999999999996px" width="10" height="8" viewBox="0 0 10 8"><path d="M0.5,0.8 L3.5,0.8 L4.5,1.8 L8.5,1.8 L8.5,7.3 L0.5,7.3Z" fill="#d4d4d4"/></svg>
<div class="t" style="left:39px;top:447.6px;font-size:7.75px">Models</div>
<svg class="a" style="left:29px;top:458.46px" width="10" height="8" viewBox="0 0 10 8"><path d="M0.5,0.8 L3.5,0.8 L4.5,1.8 L8.5,1.8 L8.5,7.3 L0.5,7.3Z" fill="#d4d4d4"/></svg>
<div class="t" style="left:39px;top:457.6px;font-size:7.75px">Sfx</div>
<svg class="a" style="left:29px;top:468.38px" width="10" height="8" viewBox="0 0 10 8"><path d="M0.5,0.8 L3.5,0.8 L4.5,1.8 L8.5,1.8 L8.5,7.3 L0.5,7.3Z" fill="#d4d4d4"/></svg>
<div class="t" style="left:39px;top:467.5px;font-size:7.75px">Textures</div>
<svg class="a" style="left:13px;top:478.8px" width="7" height="7"><path d="M0.5,0.5 L5.3,3.2 L0.5,5.9Z" fill="#858585"/></svg>
<svg class="a" style="left:20px;top:478.2px" width="10" height="8" viewBox="0 0 10 8"><path d="M0.5,0.8 L3.5,0.8 L4.5,1.8 L8.5,1.8 L8.5,7.3 L0.5,7.3Z" fill="#d4d4d4"/></svg>
<div class="t" style="left:30.7px;top:477.3px;font-size:7.75px">Environment</div>
<svg class="a" style="left:20px;top:488.09999999999997px" width="10" height="8" viewBox="0 0 10 8"><path d="M0.5,0.8 L3.5,0.8 L4.5,1.8 L8.5,1.8 L8.5,7.3 L0.5,7.3Z" fill="#d4d4d4"/></svg>
<div class="t" style="left:30.7px;top:487.2px;font-size:7.75px">InputSystem</div>
<svg class="a" style="left:20px;top:498.0px" width="10" height="8" viewBox="0 0 10 8"><path d="M0.5,0.8 L3.5,0.8 L4.5,1.8 L8.5,1.8 L8.5,7.3 L0.5,7.3Z" fill="#d4d4d4"/></svg>
<div class="t" style="left:30.7px;top:497.1px;font-size:7.75px">Prefabs</div>
<svg class="a" style="left:140px;top:405px" width="270" height="64" viewBox="140 405 270 64"><defs><linearGradient id="ga1" x1="0" y1="0" x2="0" y2="1"><stop offset="0" stop-color="#6e7686"/><stop offset="1" stop-color="#4a505c"/></linearGradient><linearGradient id="ga2" x1="0" y1="0" x2="0" y2="1"><stop offset="0" stop-color="#8c8c8c"/><stop offset="1" stop-color="#565656"/></linearGradient></defs><path d="M146.6,412.5 q0,-1.7 1.7,-1.7 h31 l10.7,10.7 v41.8 q0,1.7 -1.7,1.7 h-40 q-1.7,0 -1.7,-1.7z" fill="url(#ga1)"/><text x="151.8" y="447" font-family="Liberation Sans" font-weight="bold" font-size="27" fill="#d4dcf0" stroke="#d4dcf0" stroke-width="0.9" textLength="33" lengthAdjust="spacingAndGlyphs">HD</text><path d="M214,412.5 q0,-1.7 1.7,-1.7 h31 l10.3,10.3 v42.2 q0,1.7 -1.7,1.7 h-39.6 q-1.7,0 -1.7,-1.7z" fill="url(#ga2)"/><path d="M347.7,412.2 q0,-1.7 1.7,-1.7 h31 l10,10 v42 q0,1.7 -1.7,1.7 h-39.3 q-1.7,0 -1.7,-1.7z" fill="url(#ga2)"/></svg>
<svg class="a" style="left:214px;top:410px" width="44" height="56" viewBox="214 410 44 56"><g fill="#f4f4f4"><circle cx="232.1" cy="435.6" r="2.6"/><circle cx="238.6" cy="435.6" r="2.6"/><circle cx="232.1" cy="442.1" r="2.6"/><circle cx="238.6" cy="442.1" r="2.6"/><circle cx="225.6" cy="435.6" r="1.8"/><circle cx="245.1" cy="435.6" r="1.8"/><circle cx="225.6" cy="442.1" r="1.8"/><circle cx="245.1" cy="442.1" r="1.8"/><circle cx="232.1" cy="429.1" r="1.8"/><circle cx="238.6" cy="429.1" r="1.8"/><circle cx="232.1" cy="448.6" r="1.8"/><circle cx="238.6" cy="448.6" r="1.8"/><circle cx="225.6" cy="429.1" r="1.7"/><circle cx="245.1" cy="429.1" r="1.7"/><circle cx="225.6" cy="448.6" r="1.7"/><circle cx="245.1" cy="448.6" r="1.7"/><circle cx="219.1" cy="435.6" r="1.0"/><circle cx="251.6" cy="435.6" r="1.0"/><circle cx="219.1" cy="442.1" r="1.0"/><circle cx="251.6" cy="442.1" r="1.0"/><circle cx="232.1" cy="422.6" r="1.0"/><circle cx="238.6" cy="422.6" r="1.0"/><circle cx="232.1" cy="455.1" r="1.0"/><circle cx="238.6" cy="455.1" r="1.0"/></g></svg>
<svg class="a" style="left:282px;top:416px" width="44" height="42" viewBox="282 416 44 42"><g fill="none" stroke="#62c0ea" stroke-width="1.9" stroke-linejoin="round"><path d="M286,428 L300,421 L314,428 L314,436 M286,428 L286,444.5 L300,451.5 L302,450.5 M286,428 L300,435 L314,428 M300,435 L300,451.5"/></g><g fill="none" stroke="#f26a3c" stroke-width="2"><path d="M309.5,436.5 q-3,0 -3,3 v3.5 q0,2 -2,2 q2,0 2,2 v3.5 q0,3 3,3"/><path d="M317.5,436.5 q3,0 3,3 v3.5 q0,2 2,2 q-2,0 -2,2 v3.5 q0,3 -3,3"/></g></svg>
<svg class="a" style="left:348px;top:416px" width="44" height="42" viewBox="348 416 44 42"><defs><linearGradient id="cbg" x1="0" y1="0" x2="0" y2="1"><stop offset="0" stop-color="#9a9a9a"/><stop offset="0.45" stop-color="#6a6a6a"/><stop offset="0.55" stop-color="#5a5a5a"/><stop offset="0.75" stop-color="#404040"/><stop offset="1" stop-color="#6a6a6a"/></linearGradient></defs><path d="M353,428.5 L369,420.5 L385,428.5 L385,444 L369,452 L353,444Z" fill="url(#cbg)"/><g fill="none" stroke="#f6f6f6" stroke-width="1.9" stroke-linejoin="round"><path d="M353,428.5 L369,420.5 L385,428.5 L385,444 L369,452 L353,444Z M353,428.5 L369,436.5 L385,428.5 M369,436.5 V452"/></g></svg>
<div class="a" style="left:151.4px;top:468.4px;width:35.2px;height:8.4px;background:#474747;border-radius:2px"></div>
<div class="t" style="left:168.8px;top:467.9px;font-size:6.8px;color:#c8c8c8;transform:translateX(-50%);-webkit-text-stroke:0.1px currentColor">HDRPAsset</div>
<div class="t" style="left:235px;top:467.9px;font-size:6.6px;color:#c8c8c8;transform:translateX(-50%);-webkit-text-stroke:0.1px currentColor">HDRPDiffusionProf...</div>
<div class="t" style="left:302px;top:467.9px;font-size:6.6px;color:#c8c8c8;transform:translateX(-50%);-webkit-text-stroke:0.1px currentColor">HDRPGlobalSettin...</div>
<div class="t" style="left:369px;top:467.9px;font-size:6.6px;color:#c8c8c8;transform:translateX(-50%);-webkit-text-stroke:0.1px currentColor">HDRPGlobalSettin...</div>
</div></body></html>
